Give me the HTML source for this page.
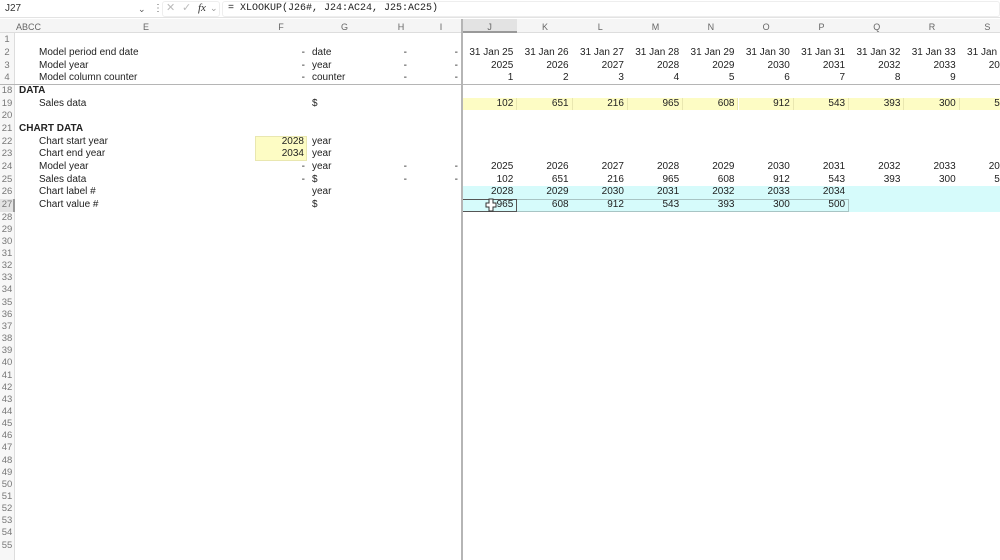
<!DOCTYPE html>
<html><head><meta charset="utf-8">
<style>
*{margin:0;padding:0;box-sizing:border-box}
body{width:1000px;height:560px;overflow:hidden;background:#fff;font-family:"Liberation Sans",sans-serif;font-size:10px;color:#222;position:relative}
.a{position:absolute;white-space:nowrap;line-height:12px}
.r{text-align:right}
.c{text-align:center}
</style></head><body>
<div class="a" style="left:0;top:0;width:1000px;height:18px;background:#fff;border-bottom:1px solid #e3e3e3"></div>
<div class="a" style="left:5px;top:3px;color:#333">J27</div>
<div class="a" style="left:138px;top:3px;color:#555;font-size:9px">&#8964;</div>
<div class="a" style="left:153px;top:3px;color:#666">&#8942;</div>
<div class="a" style="left:162px;top:1px;width:58px;height:16px;border:1px solid #eee;border-radius:3px"></div>
<div class="a" style="left:166px;top:2px;color:#bbb;font-size:11px">&#10005;</div>
<div class="a" style="left:182px;top:2px;color:#bbb;font-size:11px">&#10003;</div>
<div class="a" style="left:198px;top:2px;color:#333;font-style:italic;font-family:'Liberation Serif',serif;font-size:11px">fx</div>
<div class="a" style="left:210px;top:2px;color:#999;font-size:9px">&#8964;</div>
<div class="a" style="left:222px;top:1px;width:778px;height:16px;border:1px solid #eee;border-radius:3px"></div>
<div class="a" style="left:228px;top:3px;font-family:'Liberation Mono',monospace;font-size:10px;color:#222">= XLOOKUP(J26#, J24:AC24, J25:AC25)</div>
<div class="a" style="left:0;top:19px;width:1000px;height:14px;background:#f5f5f5;border-bottom:1px solid #ddd"></div>
<div class="a" style="left:462px;top:19px;width:55px;height:14px;background:#e3e3e3;border-bottom:2px solid #999"></div>
<div id="g"></div>
<script>
var g=document.getElementById('g'),h='';
function d(x,y,w,t,cls,st){h+='<div class="a '+(cls||'')+'" style="left:'+x+'px;top:'+y+'px;width:'+w+'px;'+(st||'')+'">'+t+'</div>';}
d(16,21,30,'ABCC','','color:#666;font-size:9px');
var hc=[['E',37,218],['F',255,52],['G',307,75],['H',382,38],['I',420,42]];
hc.forEach(function(c){d(c[1],21,c[2],c[0],'c','color:#666;font-size:9px')});
var JX=462,W=55.3,L='JKLMNOPQRS';
for(var i=0;i<10;i++)d(JX+i*W,21,W,L[i],'c','color:#666;font-size:9px');
var rows=[1,2,3,4,18,19,20,21,22,23,24,25,26,27];for(var r=28;r<=55;r++)rows.push(r);
var Y={};
rows.forEach(function(r,i){var y=i<14?34.2+i*12.67:34.2+14*12.67+(i-14)*12.15;Y[r]=y;});
h+='<div class="a" style="left:0;top:33px;width:15px;height:527px;background:#f7f7f7;border-right:1px solid #ddd"></div>';
h+='<div class="a" style="left:0;top:'+(Y[27])+'px;width:15px;height:12.6px;background:#e3e3e3;border-right:2px solid #999"></div>';
rows.forEach(function(r){d(0,Y[r],14,r,'c','color:#777;font-size:9.5px;line-height:12.6px')});
function t(r,x,w,s,cls,st){d(x,Y[r],w,s,cls,'line-height:12.6px;'+(st||''));}
for(var i=0;i<10;i++)h+='<div class="a" style="left:'+(JX+i*W)+'px;top:'+(Y[19]+0.5)+'px;width:'+W+'px;height:12px;background:#fdfcc4;border-right:1px solid #e9e7b0"></div>';
h+='<div class="a" style="left:255px;top:'+Y[22]+'px;width:52px;height:25px;background:#fdfcc4;border:1px solid #e9e7b0"></div>';
h+='<div class="a" style="left:462px;top:'+Y[26]+'px;width:538px;height:25.3px;background:#d6fbfb"></div>';
h+='<div class="a" style="left:462px;top:'+Y[27]+'px;width:387px;height:12.6px;border:1px solid #a8c4c4"></div>';
h+='<div class="a" style="left:462px;top:'+Y[27]+'px;width:55px;height:12.6px;border:1.5px solid #555"></div>';
var lab={2:'Model period end date',3:'Model year',4:'Model column counter',19:'Sales data',22:'Chart start year',23:'Chart end year',24:'Model year',25:'Sales data',26:'Chart label #',27:'Chart value #'};
for(var k in lab)t(k,39,200,lab[k]);
t(18,19,100,'DATA','','font-weight:bold');t(21,19,100,'CHART DATA','','font-weight:bold');
var G={2:'date',3:'year',4:'counter',19:'$',22:'year',23:'year',24:'year',25:'$',26:'year',27:'$'};
for(var k in G)t(k,312,70,G[k]);
[2,3,4,24,25].forEach(function(r){t(r,255,50,'-','r');t(r,382,25,'-','r');t(r,420,38,'-','r');});
t(22,255,49,'2028','r');t(23,255,49,'2034','r');
var dates=[],yrs=[],cnt=[];for(var i=0;i<10;i++){dates.push('31 Jan '+(25+i));yrs.push(2025+i);cnt.push(i+1);}
var sales=[102,651,216,965,608,912,543,393,300,500];
for(var i=0;i<10;i++){var x=JX+i*W;
t(2,x,W-4,dates[i],'r');t(3,x,W-4,yrs[i],'r');t(4,x,W-4,cnt[i],'r');
t(19,x,W-4,sales[i],'r');t(24,x,W-4,yrs[i],'r');t(25,x,W-4,sales[i],'r');}
var cv=[965,608,912,543,393,300,500];
for(var i=0;i<7;i++){var x=JX+i*W;t(26,x,W-4,2028+i,'r');t(27,x,W-4,cv[i],'r');}
h+='<div class="a" style="left:461px;top:19px;width:1.5px;height:541px;background:#b5b5b5"></div>';
h+='<div class="a" style="left:0;top:'+(Y[18]-1)+'px;width:1000px;height:1.5px;background:#b5b5b5"></div>';
h+='<svg class="a" style="left:485px;top:'+(Y[27]-1)+'px" width="12" height="14" viewBox="0 0 12 14"><path d="M4 1h4v4h3v4h-3v4h-4v-4h-3v-4h3z" fill="#fff" stroke="#333" stroke-width="1"/></svg>';
g.innerHTML=h;
</script>
</body></html>
